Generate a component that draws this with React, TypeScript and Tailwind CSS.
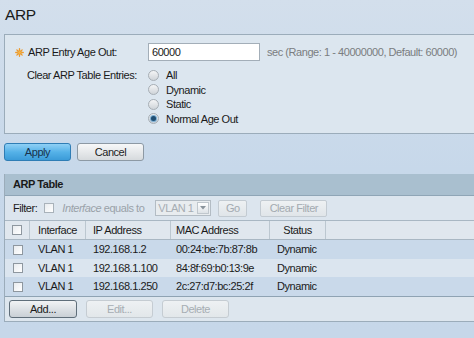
import React from "react";

function Radio({ checked }: { checked?: boolean }) {
  return (
    <span className="flex h-[11px] w-[11px] items-center justify-center rounded-full border border-[#a7aeb5] bg-gradient-to-b from-[#f4f5f6] to-[#cfd4d9]">
      {checked && <span className="h-[5px] w-[5px] rounded-full bg-[#1f4e73] shadow-[0_0_1px_1px_#6fa6cf]" />}
    </span>
  );
}

function Check({ light }: { light?: boolean }) {
  return (
    <span
      className={
        "block h-[10px] w-[10px] border bg-gradient-to-br from-[#e9ecef] to-[#ffffff] " +
        (light ? "border-[#a9b2ba]" : "border-[#8e979f]")
      }
    />
  );
}

function Sun() {
  return (
    <svg width="9" height="9" viewBox="0 0 18 18">
      <g stroke="#ee9a2a" strokeWidth="2.6" strokeLinecap="round">
        <line x1="9" y1="1.5" x2="9" y2="4" />
        <line x1="9" y1="14" x2="9" y2="16.5" />
        <line x1="1.5" y1="9" x2="4" y2="9" />
        <line x1="14" y1="9" x2="16.5" y2="9" />
        <line x1="3.7" y1="3.7" x2="5.4" y2="5.4" />
        <line x1="12.6" y1="12.6" x2="14.3" y2="14.3" />
        <line x1="3.7" y1="14.3" x2="5.4" y2="12.6" />
        <line x1="12.6" y1="5.4" x2="14.3" y2="3.7" />
      </g>
      <circle cx="9" cy="9" r="4" fill="#f7b240" stroke="#e08a1a" strokeWidth="1.2" />
    </svg>
  );
}

const rows = [
  { ip: "192.168.1.2", mac: "00:24:be:7b:87:8b", dark: true },
  { ip: "192.168.1.100", mac: "84:8f:69:b0:13:9e", dark: false },
  { ip: "192.168.1.250", mac: "2c:27:d7:bc:25:2f", dark: true },
];

export default function App() {
  return (
    <div
      className="h-[338px] w-[474px] overflow-hidden whitespace-nowrap bg-gradient-to-b from-[#d3dfec] via-[#c7d8ea] to-[#c6d7e9] text-[11px] tracking-[-0.45px] text-[#1a1a1a]"
      style={{ fontFamily: '"Liberation Sans", Arial, sans-serif' }}
    >
      <div className="h-[34px] pl-[5px] pt-[6px] text-[15.5px] leading-[18px] tracking-[-0.4px] text-[#1a1a1a]">ARP</div>

      <div className="ml-[4px] h-[100px] border-y border-l border-[#9bacba] bg-[#dce6ef] pt-[8px]">
        <div className="flex h-[18px] items-center">
          <div className="flex w-[143px] items-center pl-[10px]">
            <Sun />
            <span className="ml-[4px]">ARP Entry Age Out:</span>
          </div>
          <div className="flex h-[18px] w-[112px] items-center border border-[#a3aeb8] bg-white pl-[3px] text-[11px]">60000</div>
          <span className="ml-[7px] text-[#7a7d80]">sec (Range: 1 - 40000000, Default: 60000)</span>
        </div>
        <div className="mt-[7px] flex">
          <div className="flex h-[14.5px] w-[143px] items-center pl-[22px]">Clear ARP Table Entries:</div>
          <div className="flex flex-col">
            {["All", "Dynamic", "Static", "Normal Age Out"].map((l, i) => (
              <div key={l} className="flex h-[14.5px] items-center">
                <Radio checked={i === 3} />
                <span className="ml-[7px]">{l}</span>
              </div>
            ))}
          </div>
        </div>
      </div>

      <div className="ml-[4px] mt-[9px] flex h-[18px] gap-[6px]">
        <button className="flex h-[18px] w-[67px] items-center justify-center rounded-[3px] border border-[#2f7db5] bg-gradient-to-b from-[#8fd0f5] via-[#55b2e8] to-[#3b9bd8] text-[11px] text-[#18324d]">
          Apply
        </button>
        <button className="flex h-[18px] w-[67px] items-center justify-center rounded-[3px] border border-[#8d99a4] bg-gradient-to-b from-[#f7f8f9] to-[#d6dadd] text-[11px] text-[#1c1c1c]">
          Cancel
        </button>
      </div>

      <div className="ml-[4px] mt-[13px] border-b border-l border-[#9bacba]">
        <div className="flex h-[22px] items-center border-b border-[#8fa5b6] bg-[#a9bfcf] pl-[8px] text-[11px] font-bold text-[#1a1a1a]">
          ARP Table
        </div>
        <div className="flex h-[25px] items-center border-b border-[#a9b7c3] bg-[#dce5ee] pl-[8px]">
          <span>Filter:</span>
          <span className="ml-[7px]">
            <Check light />
          </span>
          <span className="ml-[8px] text-[#9aa2a9]">
            <i>Interface</i> equals to
          </span>
          <div className="ml-[11px] flex h-[16px] w-[56px] items-center border border-[#b3bcc4] bg-[#e8ecef]">
            <span className="flex-1 pl-[2px] text-[#a6adb3]">VLAN 1</span>
            <span className="mr-[1px] flex h-[12px] w-[12px] items-center justify-center border border-[#c0c7cd] bg-gradient-to-b from-[#ffffff] to-[#dde2e6]">
              <svg width="6" height="4" viewBox="0 0 6 4">
                <path d="M0 0 L6 0 L3 3.5 Z" fill="#8a949c" />
              </svg>
            </span>
          </div>
          <button className="ml-[7px] flex h-[17px] w-[29px] items-center justify-center rounded-[2px] border border-[#c3cbd2] bg-gradient-to-b from-[#eef1f3] to-[#e0e5e9] text-[#a3aab0]">
            Go
          </button>
          <button className="ml-[13px] flex h-[17px] w-[67px] items-center justify-center rounded-[2px] border border-[#c3cbd2] bg-gradient-to-b from-[#eef1f3] to-[#e0e5e9] text-[#a3aab0]">
            Clear Filter
          </button>
        </div>
        <div className="flex h-[19px] items-stretch border-b border-[#a9b7c3] bg-[#e0e7ee]">
          <div className="flex w-[25px] items-center justify-center border-r border-[#bcc7d0]">
            <Check />
          </div>
          <div className="flex w-[56px] items-center justify-center border-r border-[#bcc7d0]">Interface</div>
          <div className="flex w-[85px] items-center border-r border-[#bcc7d0] pl-[7px]">IP Address</div>
          <div className="flex w-[99px] items-center border-r border-[#bcc7d0] pl-[5px]">MAC Address</div>
          <div className="flex w-[56px] items-center justify-center border-r border-[#bcc7d0]">Status</div>
          <div className="flex-1" />
        </div>
        {rows.map((r, i) => (
          <div
            key={r.ip}
            className={
              "flex items-center " +
              (i === 1 ? "h-[18px] " : "h-[19px] ") +
              (r.dark ? "bg-[#c9d9ea]" : "bg-[#dbe5ef]")
            }
          >
            <div className="flex w-[25px] justify-center">
              <Check />
            </div>
            <div className="w-[56px] pl-[8px]">VLAN 1</div>
            <div className="w-[85px] pl-[7px]">{r.ip}</div>
            <div className="w-[99px] pl-[5px]">{r.mac}</div>
            <div className="pl-[7px]">Dynamic</div>
          </div>
        ))}
        <div className="flex h-[25px] items-center gap-[9px] border-t border-[#8fa3b3] bg-[#dde6ee] pl-[4px]">
          <button className="flex h-[18px] w-[68px] items-center justify-center rounded-[3px] border border-[#5f6e7a] bg-gradient-to-b from-[#f1f3f5] to-[#c9d0d6] text-[#1c1c1c]">
            Add...
          </button>
          <button className="flex h-[18px] w-[67px] items-center justify-center rounded-[3px] border border-[#c5ccd2] bg-gradient-to-b from-[#eef1f3] to-[#e2e7ea] text-[#a6adb3]">
            Edit...
          </button>
          <button className="flex h-[18px] w-[67px] items-center justify-center rounded-[3px] border border-[#c5ccd2] bg-gradient-to-b from-[#eef1f3] to-[#e2e7ea] text-[#a6adb3]">
            Delete
          </button>
        </div>
      </div>
    </div>
  );
}
